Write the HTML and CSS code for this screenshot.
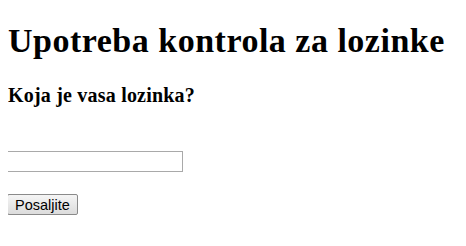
FILE: index.html
```html
<!DOCTYPE html>
<html lang="sr">
<head>
    <meta charset="UTF-8">
    <title>Lozinka</title>
    <link rel="stylesheet" href="styles.css">
</head>
<body>
    <h1 class="title">Upotreba kontrola za lozinke</h1>
    <form class="pass-form">
        <h3 class="question">Koja je vasa lozinka?</h3>
        <div class="row field-row"><input type="password" class="pass-field"></div>
        <div class="row"><button type="submit" class="btn">Posaljite</button></div>
    </form>
</body>
</html>
```

FILE: styles.css
```css
body {
    font-family: "Liberation Serif", "Times New Roman", serif;
    color: #000;
    background-color: #fff;
    margin: 8px;
}
.title {
    font-size: 34px;
    letter-spacing: 0.5px;
    line-height: 38px;
    margin: 14px 0 24px;
}
.question {
    font-size: 20px;
    letter-spacing: 0.2px;
    line-height: 22px;
    margin: 0;
}
.row {
    margin-top: 22px;
    margin-left: -1px;
}
.field-row {
    margin-top: 45px;
}
.pass-field {
    display: block;
    box-sizing: border-box;
    width: 176px;
    height: 21px;
    padding: 1px 2px;
    border: 1px solid #a9a9a9;
    font-family: "Liberation Sans", Arial, sans-serif;
    font-size: 13px;
    margin: 0;
}
.btn {
    display: block;
    box-sizing: border-box;
    height: 21px;
    font-family: "Liberation Sans", Arial, sans-serif;
    font-size: 14.5px;
    color: #000;
    background: linear-gradient(#f5f5f5, #dcdcdc);
    border: 1px solid #8a8a8a;
    border-radius: 2px;
    padding: 0 7px;
    margin: 0;
}
```
